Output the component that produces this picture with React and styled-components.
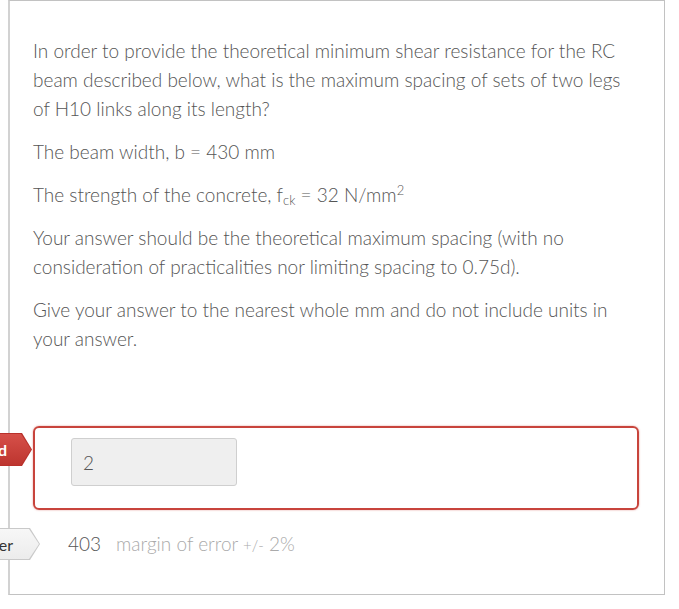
import React from "react";
import styled, { createGlobalStyle } from "styled-components";

const GlobalStyle = createGlobalStyle`
  html, body {
    margin: 0;
    padding: 0;
    background: #ffffff;
  }
  body {
    font-family: Lato, "Open Sans", sans-serif;
    font-weight: 300;
    color: #555555;
  }
`;

const Panel = styled.div`
  position: relative;
  box-sizing: border-box;
  width: 657px;
  height: 595px;
  margin-left: 8px;
  border: 1px solid #c2c2c2;
  border-left: 2px solid #d2d2d2;
  display: flex;
  flex-direction: column;
`;

const Question = styled.div`
  padding: 35px 25px 0 23px;
`;

const Para = styled.p`
  margin: 0 0 14px;
  font-size: 19px;
  line-height: 29px;
  &:last-child {
    margin-bottom: 0;
  }
  sub {
    font-size: 13px;
    vertical-align: -3px;
    line-height: 0;
  }
  sup {
    font-size: 13px;
    vertical-align: 7px;
    line-height: 0;
  }
`;

const AnswerBox = styled.div`
  position: relative;
  box-sizing: border-box;
  width: 606px;
  height: 84px;
  margin: 73px 0 0 23px;
  padding: 10px 0 0 36px;
  border: 2px solid #c8443c;
  border-radius: 6px;
  box-shadow: 0 0 2px rgba(200, 68, 60, 0.55);
`;

const Input = styled.div`
  box-sizing: border-box;
  width: 166px;
  height: 48px;
  padding: 0 11px;
  display: flex;
  align-items: center;
  background: #efefef;
  border: 1px solid #cfcfcf;
  border-radius: 3px;
  font-size: 19px;
  color: #555555;
`;

const Tag = styled.div`
  position: absolute;
  width: 120px;
  height: ${(p) => p.$h}px;
  top: ${(p) => p.$top}px;
  left: ${(p) => p.$left}px;
  clip-path: polygon(0 0, calc(100% - 10px) 0, 100% 50%, calc(100% - 10px) 100%, 0 100%);
  background: ${(p) => (p.$tone === "red" ? "#b9312b" : "#c9c9c9")};
`;

const TagInner = styled.div`
  position: absolute;
  inset: 1px 1px 1px 0;
  clip-path: polygon(0 0, calc(100% - 10px) 0, 100% 50%, calc(100% - 10px) 100%, 0 100%);
  display: flex;
  align-items: center;
  justify-content: flex-end;
  padding-right: ${(p) => (p.$tone === "red" ? 24 : 26)}px;
  white-space: nowrap;
  font-size: 16px;
  font-weight: ${(p) => (p.$tone === "red" ? 700 : 400)};
  color: ${(p) => (p.$tone === "red" ? "#ffffff" : "#333333")};
  background: ${(p) =>
    p.$tone === "red"
      ? "linear-gradient(#d65049, #bd352f)"
      : "linear-gradient(#f7f7f7, #ececec)"};
`;

const ResultRow = styled.div`
  position: relative;
  height: 31px;
  margin-top: 18px;
  padding-left: 58px;
  display: flex;
  align-items: center;
  gap: 15px;
`;

const Value = styled.span`
  font-size: 19px;
  color: #555555;
`;

const Margin = styled.span`
  font-size: 19px;
  color: #aaaaaa;
  small {
    font-size: 15px;
  }
`;

export default function App() {
  return (
    <>
      <GlobalStyle />
      <Panel>
        <Question>
          <Para>
            In order to provide the theoretical minimum shear resistance for the RC beam
            described below, what is the maximum spacing of sets of two legs of H10 links
            along its length?
          </Para>
          <Para>The beam width, b = 430 mm</Para>
          <Para>
            The strength of the concrete, f<sub>ck</sub> = 32 N/mm<sup>2</sup>
          </Para>
          <Para>
            Your answer should be the theoretical maximum spacing (with no consideration of
            practicalities nor limiting spacing to 0.75d).
          </Para>
          <Para>
            Give your answer to the nearest whole mm and do not include units in your answer.
          </Para>
        </Question>
        <AnswerBox>
          <Tag $tone="red" $h={33} $top={5} $left={-123}>
            <TagInner $tone="red">Answered</TagInner>
          </Tag>
          <Input>2</Input>
        </AnswerBox>
        <ResultRow>
          <Tag $tone="grey" $h={32} $top={0} $left={-90}>
            <TagInner $tone="grey">Correct answer</TagInner>
          </Tag>
          <Value>403</Value>
          <Margin>
            margin of error <small>+/-</small> 2%
          </Margin>
        </ResultRow>
      </Panel>
    </>
  );
}
